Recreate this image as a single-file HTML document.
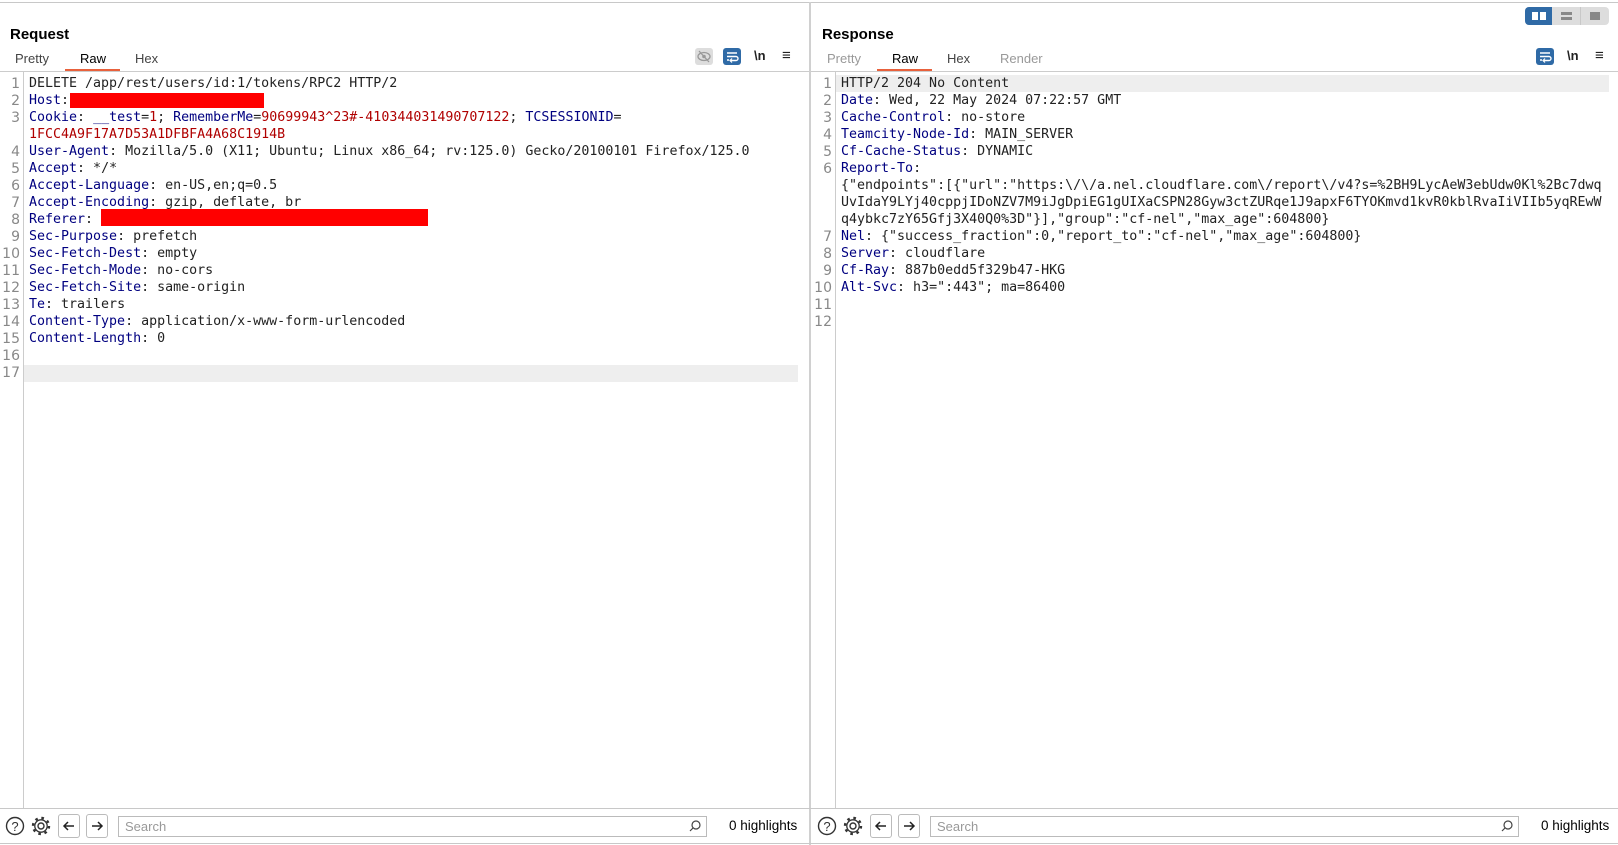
<!DOCTYPE html>
<html><head><meta charset="utf-8"><style>
*{margin:0;padding:0;box-sizing:border-box}
body{width:1618px;height:845px;background:#fff;position:relative;overflow:hidden;font-family:"Liberation Sans",sans-serif}
.a{position:absolute}
.title{font-weight:bold;font-size:15px;color:#000}
.tab{font-size:13px;color:#444}
.tab.d{color:#999}
.code{font-family:"DejaVu Sans Mono","Liberation Mono",monospace;font-size:13.3px;line-height:17px;color:#222;white-space:pre}
.ln{font-family:"DejaVu Sans",sans-serif;font-size:14px;line-height:17px;color:#888;text-align:right;white-space:pre;padding-top:1px}
.k{color:#000080}.v{color:#b00000}
.btn{border:1px solid #bbb;border-radius:3px}
.search{border:1px solid #bbb;background:#fff;font-size:13px;color:#999;padding:2px 6px}
.hl{white-space:nowrap;font-size:13.5px;color:#000}
</style></head><body>
<div class="a" style="left:0;top:2px;width:1618px;height:1px;background:#c8c8c8"></div>
<div class="a" style="left:809px;top:2px;width:2px;height:843px;background:#d0d0d0"></div>

<div class="a title" style="left:10px;top:26px">Request</div>
<div class="a tab" style="left:15px;top:51px">Pretty</div>
<div class="a tab" style="left:80px;top:51px;color:#000">Raw</div>
<div class="a tab" style="left:135px;top:51px">Hex</div>
<div class="a" style="left:65px;top:69px;width:55px;height:2px;background:#e8613c"></div>
<div class="a" style="left:0;top:71px;width:809px;height:1px;background:#ccc"></div>
<div class="a" style="left:695px;top:48px;width:18px;height:17px;background:#ddd;border-radius:3px"></div>
<svg class="a" style="left:697px;top:50px" width="14" height="13"><ellipse cx="7" cy="6.5" rx="6" ry="4" fill="none" stroke="#999" stroke-width="1.3"/><circle cx="7" cy="6.5" r="1.8" fill="#999"/><line x1="2" y1="1" x2="12" y2="12" stroke="#999" stroke-width="1.3"/></svg>
<div class="a" style="left:723px;top:48px;width:18px;height:17px;background:#2f6aa6;border-radius:3px"></div>
<svg class="a" style="left:725px;top:50px" width="14" height="13"><path d="M2 3h10M2 6.5h9a2 2 0 0 1 0 4H6M2 10h2" stroke="#fff" stroke-width="1.4" fill="none"/><path d="M7 8.5l-2 2 2 2" stroke="#fff" stroke-width="1.2" fill="none"/></svg>
<div class="a" style="left:754px;top:48px;font-size:13px;font-weight:bold;color:#222">\n</div>
<div class="a" style="left:782px;top:47px;font-size:15px;color:#222">≡</div>

<div class="a" style="left:23px;top:72px;width:1px;height:736px;background:#ccc"></div>
<div class="a" style="left:24px;top:365px;width:774px;height:17px;background:#eee"></div>
<div class="a ln" style="left:0;top:75px;width:20px">1
2
3

4
5
6
7
8
9
10
11
12
13
14
15
16
17</div>
<div class="a code" style="left:29px;top:75px">DELETE /app/rest/users/id:1/tokens/RPC2 HTTP/2
<span class="k">Host</span>:
<span class="k">Cookie</span>: <span class="k">__test</span>=<span class="v">1</span>; <span class="k">RememberMe</span>=<span class="v">90699943^23#-410344031490707122</span>; <span class="k">TCSESSIONID</span>=
<span class="v">1FCC4A9F17A7D53A1DFBFA4A68C1914B</span>
<span class="k">User-Agent</span>: Mozilla/5.0 (X11; Ubuntu; Linux x86_64; rv:125.0) Gecko/20100101 Firefox/125.0
<span class="k">Accept</span>: */*
<span class="k">Accept-Language</span>: en-US,en;q=0.5
<span class="k">Accept-Encoding</span>: gzip, deflate, br
<span class="k">Referer</span>:
<span class="k">Sec-Purpose</span>: prefetch
<span class="k">Sec-Fetch-Dest</span>: empty
<span class="k">Sec-Fetch-Mode</span>: no-cors
<span class="k">Sec-Fetch-Site</span>: same-origin
<span class="k">Te</span>: trailers
<span class="k">Content-Type</span>: application/x-www-form-urlencoded
<span class="k">Content-Length</span>: 0</div>
<div class="a" style="left:70px;top:93px;width:194px;height:15px;background:#f00"></div>
<div class="a" style="left:101px;top:209px;width:327px;height:17px;background:#f00"></div>

<div class="a title" style="left:822px;top:26px">Response</div>
<div class="a tab d" style="left:827px;top:51px">Pretty</div>
<div class="a tab" style="left:892px;top:51px;color:#000">Raw</div>
<div class="a tab" style="left:947px;top:51px">Hex</div>
<div class="a tab d" style="left:1000px;top:51px">Render</div>
<div class="a" style="left:877px;top:69px;width:55px;height:2px;background:#e8613c"></div>
<div class="a" style="left:811px;top:71px;width:807px;height:1px;background:#ccc"></div>
<div class="a" style="left:1536px;top:48px;width:18px;height:17px;background:#2f6aa6;border-radius:3px"></div>
<svg class="a" style="left:1538px;top:50px" width="14" height="13"><path d="M2 3h10M2 6.5h9a2 2 0 0 1 0 4H6M2 10h2" stroke="#fff" stroke-width="1.4" fill="none"/><path d="M7 8.5l-2 2 2 2" stroke="#fff" stroke-width="1.2" fill="none"/></svg>
<div class="a" style="left:1567px;top:48px;font-size:13px;font-weight:bold;color:#222">\n</div>
<div class="a" style="left:1595px;top:47px;font-size:15px;color:#222">≡</div>
<div class="a" style="left:1525px;top:7px;width:84px;height:18px;background:#ddd;border-radius:4px"></div>
<div class="a" style="left:1525px;top:7px;width:27px;height:18px;background:#2f6aa6;border-radius:4px 0 0 4px"></div>
<div class="a" style="left:1532px;top:12px;width:6px;height:8px;background:#fff"></div>
<div class="a" style="left:1540px;top:12px;width:6px;height:8px;background:#fff"></div>
<div class="a" style="left:1580px;top:7px;width:1px;height:18px;background:#c8c8c8"></div>
<div class="a" style="left:1561px;top:12px;width:11px;height:3px;background:#888"></div>
<div class="a" style="left:1561px;top:17px;width:11px;height:3px;background:#888"></div>
<div class="a" style="left:1590px;top:12px;width:10px;height:8px;background:#888"></div>

<div class="a" style="left:835px;top:72px;width:1px;height:736px;background:#ccc"></div>
<div class="a" style="left:836px;top:75px;width:773px;height:17px;background:#eee"></div>
<div class="a ln" style="left:812px;top:75px;width:20px">1
2
3
4
5
6



7
8
9
10
11
12</div>
<div class="a code" style="left:841px;top:75px">HTTP/2 204 No Content
<span class="k">Date</span>: Wed, 22 May 2024 07:22:57 GMT
<span class="k">Cache-Control</span>: no-store
<span class="k">Teamcity-Node-Id</span>: MAIN_SERVER
<span class="k">Cf-Cache-Status</span>: DYNAMIC
<span class="k">Report-To</span>:
{"endpoints":[{"url":"https:\/\/a.nel.cloudflare.com\/report\/v4?s=%2BH9LycAeW3ebUdw0Kl%2Bc7dwq
UvIdaY9LYj40cppjIDoNZV7M9iJgDpiEG1gUIXaCSPN28Gyw3ctZURqe1J9apxF6TYOKmvd1kvR0kblRvaIiVIIb5yqREwW
q4ybkc7zY65Gfj3X40Q0%3D"}],"group":"cf-nel","max_age":604800}
<span class="k">Nel</span>: {"success_fraction":0,"report_to":"cf-nel","max_age":604800}
<span class="k">Server</span>: cloudflare
<span class="k">Cf-Ray</span>: 887b0edd5f329b47-HKG
<span class="k">Alt-Svc</span>: h3=":443"; ma=86400</div>

<div class="a" style="left:0;top:808px;width:1618px;height:1px;background:#c8c8c8"></div>
<div class="a" style="left:0;top:843px;width:1618px;height:1px;background:#c8c8c8"></div>

<div class="a" style="left:0;top:0">
<svg class="a" style="left:5px;top:816px" width="20" height="20"><circle cx="10" cy="10" r="8.5" fill="none" stroke="#333" stroke-width="1.4"/><text x="10" y="15" font-size="13" text-anchor="middle" fill="#333" font-family="Liberation Sans">?</text></svg>
<svg class="a" style="left:31px;top:816px" width="20" height="20"><circle cx="10" cy="10" r="3" fill="none" stroke="#333" stroke-width="1.4"/><circle cx="10" cy="10" r="8" fill="none" stroke="#333" stroke-width="2.4" stroke-dasharray="2.6 3.7"/><circle cx="10" cy="10" r="6.2" fill="none" stroke="#333" stroke-width="1.3"/></svg>
<div class="a btn" style="left:58px;top:814px;width:22px;height:24px"></div>
<svg class="a" style="left:61px;top:818px" width="16" height="16"><path d="M13 8H3M7 4L3 8l4 4" stroke="#222" stroke-width="1.5" fill="none"/></svg>
<div class="a btn" style="left:86px;top:814px;width:22px;height:24px"></div>
<svg class="a" style="left:89px;top:818px" width="16" height="16"><path d="M3 8h10M9 4l4 4-4 4" stroke="#222" stroke-width="1.5" fill="none"/></svg>
<div class="a search" style="left:118px;top:816px;width:589px;height:21px">Search</div>
<svg class="a" style="left:688px;top:819px" width="14" height="14"><circle cx="8" cy="6" r="4" fill="none" stroke="#444" stroke-width="1.2"/><line x1="5" y1="9" x2="2" y2="12" stroke="#444" stroke-width="1.2"/></svg>
<div class="a hl" style="left:729px;top:818px">0 highlights</div>
</div>

<div class="a" style="left:812px;top:0">
<svg class="a" style="left:5px;top:816px" width="20" height="20"><circle cx="10" cy="10" r="8.5" fill="none" stroke="#333" stroke-width="1.4"/><text x="10" y="15" font-size="13" text-anchor="middle" fill="#333" font-family="Liberation Sans">?</text></svg>
<svg class="a" style="left:31px;top:816px" width="20" height="20"><circle cx="10" cy="10" r="3" fill="none" stroke="#333" stroke-width="1.4"/><circle cx="10" cy="10" r="8" fill="none" stroke="#333" stroke-width="2.4" stroke-dasharray="2.6 3.7"/><circle cx="10" cy="10" r="6.2" fill="none" stroke="#333" stroke-width="1.3"/></svg>
<div class="a btn" style="left:58px;top:814px;width:22px;height:24px"></div>
<svg class="a" style="left:61px;top:818px" width="16" height="16"><path d="M13 8H3M7 4L3 8l4 4" stroke="#222" stroke-width="1.5" fill="none"/></svg>
<div class="a btn" style="left:86px;top:814px;width:22px;height:24px"></div>
<svg class="a" style="left:89px;top:818px" width="16" height="16"><path d="M3 8h10M9 4l4 4-4 4" stroke="#222" stroke-width="1.5" fill="none"/></svg>
<div class="a search" style="left:118px;top:816px;width:589px;height:21px">Search</div>
<svg class="a" style="left:688px;top:819px" width="14" height="14"><circle cx="8" cy="6" r="4" fill="none" stroke="#444" stroke-width="1.2"/><line x1="5" y1="9" x2="2" y2="12" stroke="#444" stroke-width="1.2"/></svg>
<div class="a hl" style="left:729px;top:818px">0 highlights</div>
</div>
</body></html>
